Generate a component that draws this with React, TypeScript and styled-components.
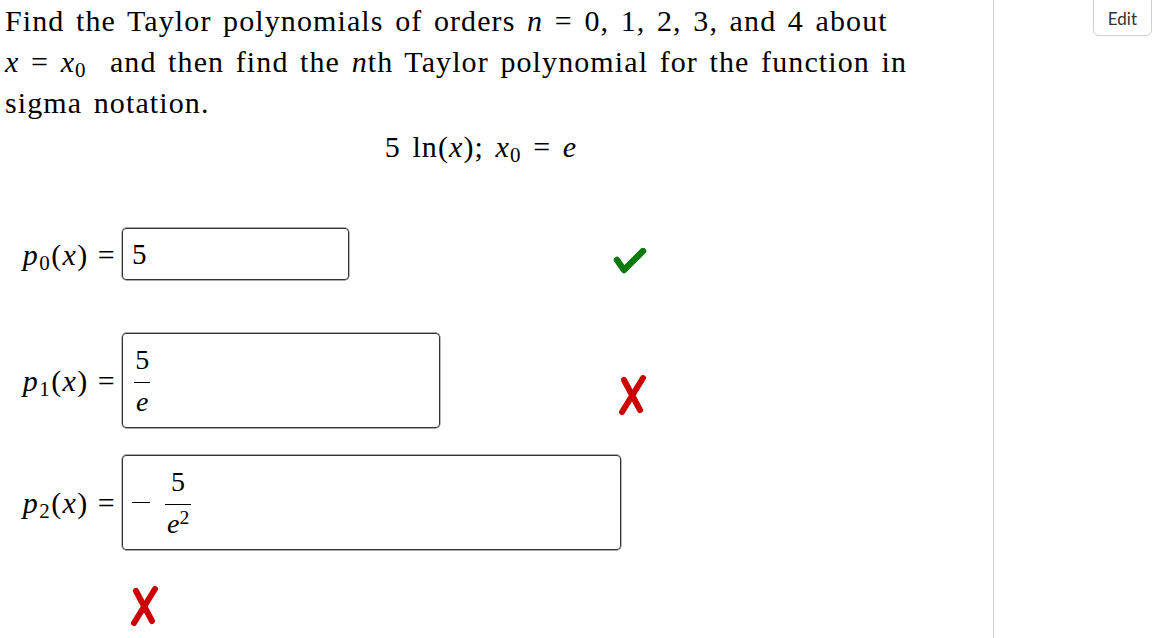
import React from 'react';
import styled, { createGlobalStyle } from 'styled-components';

const GlobalStyle = createGlobalStyle`
  html, body {
    margin: 0;
    padding: 0;
    background: #fff;
  }
  body {
    font-family: 'Liberation Serif', 'DejaVu Serif', serif;
    color: #000;
  }
`;

const Page = styled.div`
  display: flex;
  width: 1161px;
  height: 638px;
  overflow: hidden;
`;

const Main = styled.div`
  width: 994px;
  border-right: 1px solid #d3d3d3;
  box-sizing: border-box;
  padding: 0 0 0 5px;
`;

const Side = styled.div`
  flex: 1;
  display: flex;
  justify-content: flex-end;
  align-items: flex-start;
  padding-right: 9px;
`;

const EditButton = styled.button`
  margin-top: -6px;
  height: 42px;
  padding: 6px 14px 0;
  background: #fff;
  border: 1px solid #cfcfcf;
  border-radius: 6px;
  font-family: Lato, 'Open Sans', sans-serif;
  font-size: 17px;
  color: #333;
  cursor: pointer;
`;

const Tex = styled.div`
  font-family: 'Liberation Serif', 'DejaVu Serif', serif;
  font-size: 30px;
  line-height: 41px;
  letter-spacing: 1.1px;
  word-spacing: 3px;
`;

const Prompt = styled(Tex)`
  width: 950px;
  white-space: nowrap;
`;

const I = styled.span`
  font-style: italic;
`;

const Sub = styled.sub`
  font-size: 0.7em;
  vertical-align: -0.25em;
  line-height: 0;
`;

const Sup = styled.sup`
  font-size: 0.7em;
  vertical-align: 0.45em;
  line-height: 0;
`;

const Formula = styled(Tex)`
  width: 952px;
  text-align: center;
  margin-top: 3px;
`;

const Row = styled.div<{ $top: number; $stack?: boolean }>`
  display: flex;
  flex-direction: ${(p) => (p.$stack ? 'column' : 'row')};
  align-items: ${(p) => (p.$stack ? 'flex-start' : 'center')};
  margin-top: ${(p) => p.$top}px;
`;

const Answer = styled.div<{ $span: number }>`
  display: flex;
  align-items: center;
  width: ${(p) => p.$span}px;
`;

const Label = styled(Tex)`
  width: 117px;
  flex-shrink: 0;
  white-space: nowrap;
  text-align: right;
  padding-right: 6px;
  box-sizing: border-box;
  letter-spacing: 1.4px;
`;

const Eq = styled.span`
  margin-left: 9px;
`;

const Box = styled.div<{ $w: number; $h: number }>`
  width: ${(p) => p.$w}px;
  height: ${(p) => p.$h}px;
  box-sizing: border-box;
  border: 1px solid #333;
  border-radius: 4px;
  box-shadow: 0 0 0 0.4px #555;
  display: flex;
  align-items: center;
  padding-left: 9px;
  font-family: 'Liberation Serif', 'DejaVu Serif', serif;
  font-size: 29px;
`;

const Frac = styled.span`
  display: inline-flex;
  flex-direction: column;
  align-items: center;
  line-height: 1;
  font-size: 28px;
  margin: 0 4px 0 2px;
`;

const Num = styled.span`
  padding: 0 1px 8px;
`;

const Den = styled.span`
  border-top: 1.3px solid #000;
  padding: 5px 2px 0;
`;

const Minus = styled.span`
  display: inline-block;
  width: 18px;
  height: 1.3px;
  background: #000;
  margin-right: 13px;
`;

const Mark = styled.div<{ $left: number; $top?: number }>`
  margin-left: ${(p) => p.$left}px;
  margin-top: ${(p) => p.$top ?? 0}px;
  display: flex;
`;

const CheckIcon = () => (
  <svg width="34" height="26" viewBox="0 0 34 26">
    <path
      d="M4 12 L11 22 L30 3"
      fill="none"
      stroke="#0b7a0b"
      strokeWidth="6.5"
      strokeLinecap="round"
      strokeLinejoin="round"
    />
  </svg>
);

const CrossIcon = () => (
  <svg width="30" height="40" viewBox="0 0 30 40">
    <path d="M26 3 L5 37" fill="none" stroke="#cc0000" strokeWidth="6" strokeLinecap="round" />
    <path d="M7 5 L23 35" fill="none" stroke="#cc0000" strokeWidth="6" strokeLinecap="round" />
  </svg>
);

const PLabel = ({ n }: { n: number }) => (
  <Label>
    <I>p</I>
    <Sub>{n}</Sub>(<I>x</I>)<Eq>=</Eq>
  </Label>
);

export default function App() {
  return (
    <>
      <GlobalStyle />
      <Page>
        <Main>
          <Prompt>
            Find the Taylor polynomials of orders <I>n</I> = 0, 1, 2, 3, and 4 about
            <br />
            <I>x</I> = <I>x</I>
            <Sub>0</Sub>&nbsp; and then find the <I>n</I>th Taylor polynomial for the function in
            <br />
            sigma notation.
          </Prompt>
          <Formula>
            5 ln(<I>x</I>); <I>x</I>
            <Sub>0</Sub> = <I>e</I>
          </Formula>

          <Row $top={61}>
            <Answer $span={608}>
              <PLabel n={0} />
              <Box $w={227} $h={52}>5</Box>
            </Answer>
            <Mark $left={0} $top={14}>
              <CheckIcon />
            </Mark>
          </Row>

          <Row $top={53}>
            <Answer $span={608}>
              <PLabel n={1} />
              <Box $w={318} $h={95}>
                <Frac>
                  <Num>5</Num>
                  <Den>
                    <I>e</I>
                  </Den>
                </Frac>
              </Box>
            </Answer>
            <Mark $left={4} $top={28}>
              <CrossIcon />
            </Mark>
          </Row>

          <Row $top={27} $stack>
            <Answer $span={620}>
              <PLabel n={2} />
              <Box $w={499} $h={95}>
                <Minus />
                <Frac>
                  <Num>5</Num>
                  <Den>
                    <I>e</I>
                    <Sup>2</Sup>
                  </Den>
                </Frac>
              </Box>
            </Answer>
            <Mark $left={124} $top={36}>
              <CrossIcon />
            </Mark>
          </Row>
        </Main>
        <Side>
          <EditButton>Edit</EditButton>
        </Side>
      </Page>
    </>
  );
}
